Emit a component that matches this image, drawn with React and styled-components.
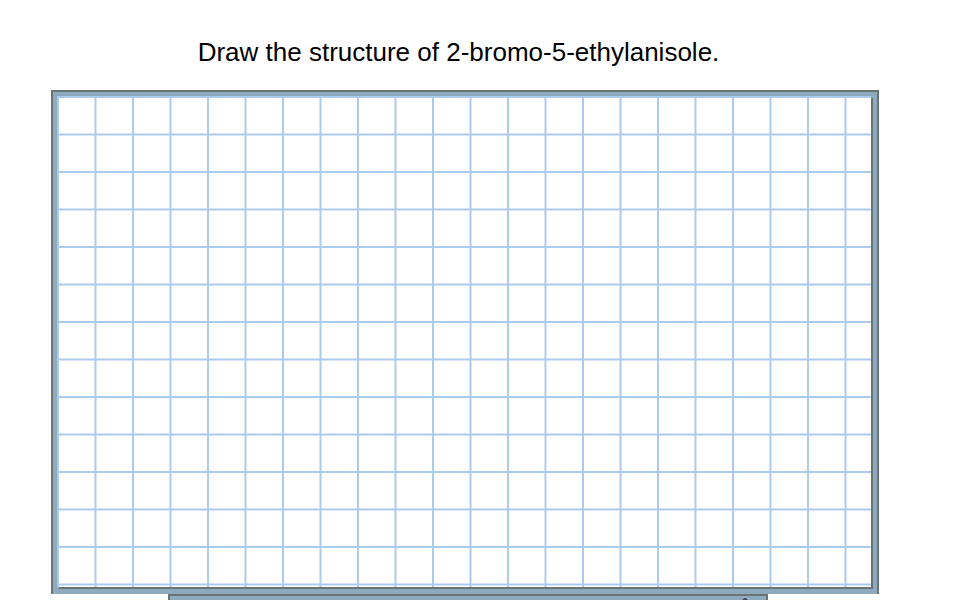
import React from "react";
import styled, { createGlobalStyle } from "styled-components";

const COLORS = {
  frame: "#8eaabe",
  frameEdge: "#6a7473",
  grid: "#aacbee",
  paper: "#ffffff",
  ink: "#000000",
};

const CELL = 37.5;

const GlobalStyle = createGlobalStyle`
  html, body {
    margin: 0;
    padding: 0;
    overflow: hidden;
    background: #ffffff;
  }
`;

const Page = styled.div`
  display: flex;
  flex-direction: column;
  align-items: flex-start;
  padding: 37px 0 0 51px;
  height: 600px;
  box-sizing: border-box;
  font-family: "Liberation Sans", Arial, sans-serif;
  color: ${COLORS.ink};
`;

const Prompt = styled.h1`
  width: 815px;
  margin: 0 0 23px;
  font-size: 26px;
  line-height: 30px;
  font-weight: 400;
  text-align: center;
`;

const Frame = styled.div`
  width: 828px;
  box-sizing: border-box;
  padding: 4px 6px 7px 4px;
  background: ${COLORS.frame};
  border: 2px solid ${COLORS.frameEdge};
  border-bottom: none;
`;

// drawing area: white paper with a light blue grid and a dark drop edge
const Canvas = styled.div`
  height: 491px;
  background-color: ${COLORS.paper};
  background-image: linear-gradient(to right, ${COLORS.grid} 2px, transparent 2px),
    linear-gradient(to bottom, ${COLORS.grid} 2px, transparent 2px);
  background-size: ${CELL}px ${CELL}px;
  box-shadow: 2px 2px 0 ${COLORS.frameEdge};
`;

const Toolbar = styled.div`
  display: flex;
  justify-content: flex-end;
  width: 600px;
  height: 40px;
  margin-left: 117px;
  padding: 2px 17px 0 0;
  box-sizing: border-box;
  background: ${COLORS.frame};
  border: 2px solid ${COLORS.frameEdge};
  border-bottom: none;
`;

const ToolIcon = styled.svg`
  width: 8px;
  height: 12px;
  color: #4a4a55;
`;

const App = () => {
  return (
    <>
      <GlobalStyle />
      <Page>
        <Prompt>Draw the structure of 2-bromo-5-ethylanisole.</Prompt>
        <Frame>
          <Canvas />
        </Frame>
        <Toolbar>
          <ToolIcon viewBox="0 0 8 12">
            <path d="M4 0 L4 12 M1 3 L4 0 L7 3" stroke="currentColor" strokeWidth="1.2" fill="none" />
          </ToolIcon>
        </Toolbar>
      </Page>
    </>
  );
};

export default App;
